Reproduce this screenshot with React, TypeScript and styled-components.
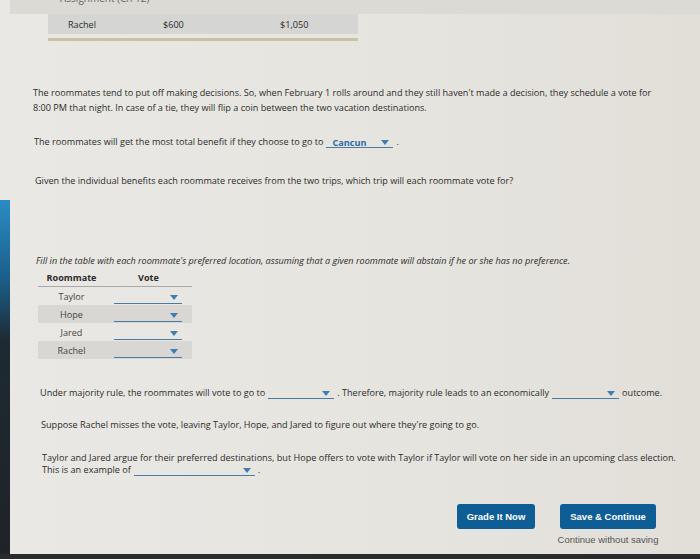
import styled, { createGlobalStyle } from 'styled-components';

const GlobalStyle = createGlobalStyle`
  html, body {
    margin: 0;
    padding: 0;
    background: #e7e5e0;
  }
  body {
    font-family: 'Open Sans', 'DejaVu Sans', sans-serif;
    color: #2b2b2b;
  }
`;

const Screen = styled.div`
  width: 700px;
  height: 559px;
  overflow: hidden;
  display: flex;
  flex-direction: column;
  background: linear-gradient(90deg, #e9e8e4 0%, #e6e4df 60%, #e2dfd9 100%);
`;

const Main = styled.div`
  flex: 1;
  display: flex;
  min-height: 0;
`;

const Bezel = styled.div`
  width: 10px;
  display: flex;
  flex-direction: column;
  .strip {
    margin-top: 200px;
    flex: 1;
    background: linear-gradient(180deg, #2a8cc4 0%, #1b5f8a 22%, #1d2a33 40%, #202326 100%);
  }
`;

const BottomEdge = styled.div`
  height: 5px;
  background: #2a2b2d;
`;

const Content = styled.div`
  flex: 1;
  display: flex;
  flex-direction: column;
`;

const TopBand = styled.div`
  height: 14px;
  background: #dcdad5;
  overflow: hidden;
  padding-left: 50px;
  font-size: 10px;
  color: #666;
  span {
    display: block;
    margin-top: -9px;
  }
`;

const PrevRow = styled.div`
  margin-left: 38px;
  width: 310px;
  height: 20px;
  display: flex;
  align-items: center;
  background: #d5d5d3;
  font-size: 9.1px;
  span:nth-child(1) { margin-left: 20px; width: 95px; }
  span:nth-child(2) { width: 117px; }
`;

const PrevRule = styled.div`
  margin: 4px 0 0 38px;
  width: 310px;
  height: 3px;
  background: #c9c3a6;
`;

const Para = styled.p<{ $indent: number; $top: number; $lh?: number; $italic?: boolean; $right?: number }>`
  margin: ${(p) => p.$top}px ${(p) => p.$right ?? 20}px 0 ${(p) => p.$indent}px;
  font-size: 9.1px;
  line-height: ${(p) => p.$lh ?? 15}px;
  font-style: ${(p) => (p.$italic ? 'italic' : 'normal')};
`;

const Drop = styled.span<{ $w: number }>`
  display: inline-flex;
  align-items: center;
  justify-content: space-between;
  width: ${(p) => p.$w}px;
  height: 11px;
  margin: 0 3px;
  border-bottom: 1px solid #4a7aa3;
  vertical-align: middle;
  box-sizing: border-box;
  padding: 0 4px 0 6px;
  b {
    color: #2f6aa3;
    font-weight: 700;
  }
`;

const Arrow = styled.span`
  margin-left: auto;
  width: 0;
  height: 0;
  border-left: 4px solid transparent;
  border-right: 4px solid transparent;
  border-top: 5px solid #3f7db3;
`;

const Table = styled.div`
  margin-left: 28px;
  width: 154px;
  font-size: 9.1px;
`;

const HeadRow = styled.div`
  display: grid;
  grid-template-columns: 67px 87px;
  height: 19px;
  align-items: center;
  font-weight: 700;
  border-bottom: 1px solid #a9a9a9;
  box-sizing: border-box;
  text-align: center;
`;

const VoteRow = styled.div<{ $shade: boolean }>`
  display: grid;
  grid-template-columns: 67px 87px;
  height: 18px;
  align-items: center;
  background: ${(p) => (p.$shade ? '#d8d7d3' : 'transparent')};
  color: #444;
  span {
    text-align: center;
  }
  ${Drop} {
    margin: 4px 0 0 9px;
  }
`;

const Footer = styled.div`
  margin-top: 28px;
  display: flex;
  justify-content: flex-end;
  gap: 25px;
  padding-right: 44px;
`;

const Col = styled.div<{ $w: number }>`
  width: ${(p) => p.$w}px;
  display: flex;
  flex-direction: column;
  align-items: center;
  gap: 5px;
  small {
    white-space: nowrap;
    font-family: 'Liberation Sans', Arial, sans-serif;
    font-size: 9.5px;
    color: #555;
  }
`;

const Button = styled.button`
  width: 100%;
  height: 25px;
  border: none;
  border-radius: 3px;
  background: #0f5d95;
  color: #fff;
  font-family: 'Liberation Sans', Arial, sans-serif;
  font-weight: 700;
  font-size: 9.5px;
  padding: 0;
`;

const roommates = ['Taylor', 'Hope', 'Jared', 'Rachel'];

export default function App() {
  return (
    <>
      <GlobalStyle />
      <Screen>
        <Main>
          <Bezel>
            <div className="strip" />
          </Bezel>
          <Content>
            <TopBand>
              <span>Assignment (Ch 12)</span>
            </TopBand>
            <PrevRow>
              <span>Rachel</span>
              <span>$600</span>
              <span>$1,050</span>
            </PrevRow>
            <PrevRule />
            <Para $indent={23} $top={44} $right={38}>
              The roommates tend to put off making decisions. So, when February 1 rolls around and they still haven't made a decision, they schedule a vote for 8:00 PM that night. In case of a tie, they will flip a coin between the two vacation destinations.
            </Para>
            <Para $indent={24} $top={19}>
              The roommates will get the most total benefit if they choose to go to
              <Drop $w={67}>
                <b>Cancun</b>
                <Arrow />
              </Drop>
              .
            </Para>
            <Para $indent={25} $top={24}>
              Given the individual benefits each roommate receives from the two trips, which trip will each roommate vote for?
            </Para>
            <Para $indent={26} $top={65} $italic>
              Fill in the table with each roommate's preferred location, assuming that a given roommate will abstain if he or she has no preference.
            </Para>
            <Table>
              <HeadRow>
                <span>Roommate</span>
                <span>Vote</span>
              </HeadRow>
              {roommates.map((name, i) => (
                <VoteRow key={name} $shade={i % 2 === 1}>
                  <span>{name}</span>
                  <Drop $w={68}>
                    <Arrow />
                  </Drop>
                </VoteRow>
              ))}
            </Table>
            <Para $indent={30} $top={26}>
              Under majority rule, the roommates will vote to go to
              <Drop $w={66}>
                <Arrow />
              </Drop>
              . Therefore, majority rule leads to an economically
              <Drop $w={67}>
                <Arrow />
              </Drop>
              outcome.
            </Para>
            <Para $indent={31} $top={17}>
              Suppose Rachel misses the vote, leaving Taylor, Hope, and Jared to figure out where they're going to go.
            </Para>
            <Para $indent={32} $top={20} $lh={12}>
              Taylor and Jared argue for their preferred destinations, but Hope offers to vote with Taylor if Taylor will vote on her side in an upcoming class election.
              <br />
              This is an example of
              <Drop $w={121}>
                <Arrow />
              </Drop>
              .
            </Para>
            <Footer>
              <Col $w={78}>
                <Button>Grade It Now</Button>
              </Col>
              <Col $w={96}>
                <Button>Save &amp; Continue</Button>
                <small>Continue without saving</small>
              </Col>
            </Footer>
          </Content>
        </Main>
        <BottomEdge />
      </Screen>
    </>
  );
}
